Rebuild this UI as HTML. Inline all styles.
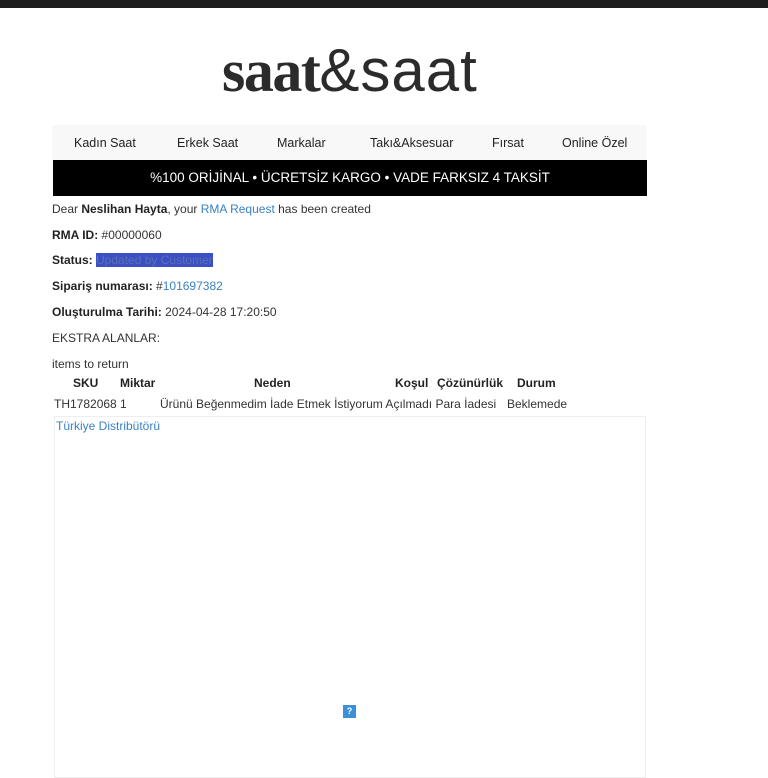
<!DOCTYPE html>
<html><head><meta charset="utf-8"><style>
body{margin:0;width:768px;height:768px;background:#fff;font-family:"Liberation Sans",Arial,sans-serif;font-size:12px;color:#333;position:relative;overflow:hidden}
.a{position:absolute;white-space:nowrap}
b{color:#222}
.l{color:#3a82c4}
</style></head><body>
<div class="a" style="left:0;top:0;width:768px;height:8px;background:#1e1e1e"></div>
<div class="a" style="left:222px;top:36px;font-size:60px;line-height:70px;color:#2b2b2b"><span style="font-family:'Liberation Serif',serif;font-weight:bold;letter-spacing:-1.5px">saat</span><span style="font-family:'Liberation Sans',sans-serif;letter-spacing:1px">&amp;saat</span></div>
<div class="a" style="left:52px;top:125px;width:595px;height:35px;background:#f8f8f8"></div>
<div class="a" style="left:74px;top:136px;font-size:12.5px;color:#222">Kadın Saat</div>
<div class="a" style="left:177px;top:136px;font-size:12.5px;color:#222">Erkek Saat</div>
<div class="a" style="left:277px;top:136px;font-size:12.5px;color:#222">Markalar</div>
<div class="a" style="left:370px;top:136px;font-size:12.5px;color:#222">Takı&amp;Aksesuar</div>
<div class="a" style="left:492px;top:136px;font-size:12.5px;color:#222">Fırsat</div>
<div class="a" style="left:562px;top:136px;font-size:12.5px;color:#222">Online Özel</div>
<div class="a" style="left:53px;top:160px;width:594px;height:36px;background:#000;color:#fff;font-size:13.5px;line-height:36px;text-align:center">%100 ORİJİNAL • ÜCRETSİZ KARGO • VADE FARKSIZ 4 TAKSİT</div>
<div class="a" style="left:52px;top:202px">Dear <b>Neslihan Hayta</b>, your <span class="l">RMA Request</span> has been created</div>
<div class="a" style="left:52px;top:228px"><b>RMA ID:</b> #00000060</div>
<div class="a" style="left:52px;top:253px"><b>Status:</b> <span style="background:#3b4fc4;color:#5a6fb0">Updated by Customer</span></div>
<div class="a" style="left:52px;top:279px"><b>Sipariş numarası:</b> #<span class="l">101697382</span></div>
<div class="a" style="left:52px;top:305px"><b>Oluşturulma Tarihi:</b> 2024-04-28 17:20:50</div>
<div class="a" style="left:52px;top:331px">EKSTRA ALANLAR:</div>
<div class="a" style="left:52px;top:357px">items to return</div>
<b class="a" style="left:73px;top:376px">SKU</b>
<b class="a" style="left:120px;top:376px">Miktar</b>
<b class="a" style="left:254px;top:376px">Neden</b>
<b class="a" style="left:395px;top:376px">Koşul</b>
<b class="a" style="left:437px;top:376px">Çözünürlük</b>
<b class="a" style="left:517px;top:376px">Durum</b>
<div class="a" style="left:54px;top:397px">TH1782068 1</div>
<div class="a" style="left:160px;top:397px">Ürünü Beğenmedim İade Etmek İstiyorum Açılmadı Para İadesi</div>
<div class="a" style="left:507px;top:397px">Beklemede</div>
<div class="a" style="left:54px;top:416px;width:590px;height:360px;border:1px solid #eee"></div>
<div class="a l" style="left:56px;top:419px">Türkiye Distribütörü</div>
<div class="a" style="left:343px;top:705px;width:13px;height:13px;background:#3d8fd8;color:#fff;font-size:9px;line-height:13px;text-align:center;font-weight:bold">?</div>
</body></html>
